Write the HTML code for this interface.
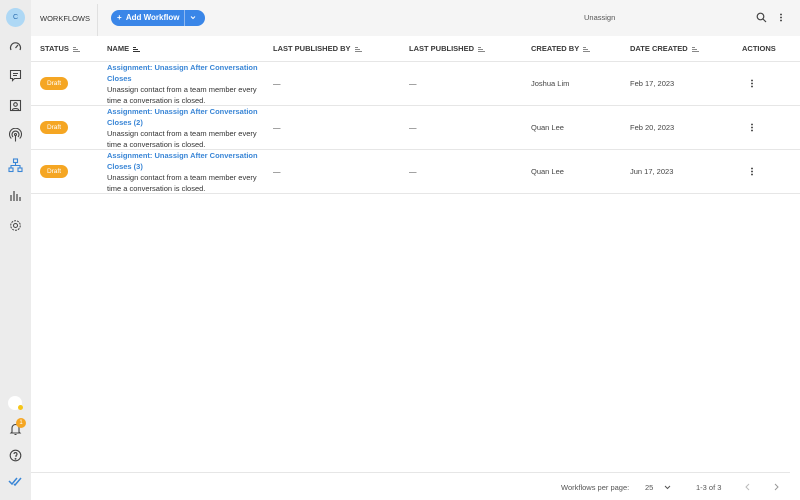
<!DOCTYPE html>
<html><head><style>
*{box-sizing:border-box;margin:0;padding:0}
body{width:800px;height:500px;overflow:hidden;background:#fff;font-family:"Liberation Sans",sans-serif;color:#333;position:relative}
.side{position:absolute;left:0;top:0;width:31px;height:500px;background:#ececec}
.hdr{position:absolute;left:31px;top:0;width:769px;height:36px;background:#f5f5f5}
.abs{position:absolute}
.th{position:absolute;top:44px;font-size:7.5px;font-weight:bold;color:#3a3a3a}
.sort{display:inline-block;width:7px;height:5px;margin-left:4px;vertical-align:middle;background:linear-gradient(#888,#888) 0 0/3px 1px no-repeat,linear-gradient(#888,#888) 0 2px/5px 1px no-repeat,linear-gradient(#888,#888) 0 4px/7px 1px no-repeat}
.line{position:absolute;left:31px;width:769px;height:1px;background:#e6e6e6}
.draft{position:absolute;left:40px;width:28px;height:13px;border-radius:6.5px;background:#f5a623;color:#fff;font-size:6.5px;display:flex;align-items:center;justify-content:center}
.nm{position:absolute;left:107px;font-size:7.5px;line-height:11px;width:165px}
.nm b{color:#3a86d6}
.c{position:absolute;font-size:7.5px;color:#444}
.dots{position:absolute;width:2px;height:8px;background:radial-gradient(circle,#555 0.9px,transparent 1px) 0 0/2px 3px}
svg{position:absolute}
</style></head><body>
<div class="side"></div>
<div class="abs" style="left:6px;top:8px;width:19px;height:19px;border-radius:50%;background:#aed8f5;color:#2a6db0;font-size:7px;text-align:center;line-height:19px">C</div>
<svg style="left:9px;top:40px" width="13" height="13" viewBox="0 0 13 13" fill="none" stroke="#444" stroke-width="1.2"><path d="M2 10A5 5 0 1 1 11 10"/><path d="M6.5 8L9 5"/></svg>
<svg style="left:9px;top:69px" width="13" height="13" viewBox="0 0 13 13" fill="none" stroke="#444" stroke-width="1.1"><path d="M1.5 1.5h10v8h-6l-2 2v-2h-2z"/><path d="M4 4.5h5M4 6.5h4"/></svg>
<svg style="left:9px;top:99px" width="13" height="13" viewBox="0 0 13 13" fill="none" stroke="#444" stroke-width="1.1"><rect x="1.5" y="1.5" width="10" height="10"/><circle cx="6.5" cy="5.5" r="1.8"/><path d="M3.5 11c0-2 6-2 6 0"/></svg>
<svg style="left:9px;top:128px" width="13" height="14" viewBox="0 0 13 14" fill="none" stroke="#444" stroke-width="1.1"><circle cx="6.5" cy="6.5" r="1"/><path d="M6.5 7.5v6M4 9a3.5 3.5 0 1 1 5 0M2.3 10.5a6 6 0 1 1 8.4 0"/></svg>
<svg style="left:8px;top:158px" width="15" height="15" viewBox="0 0 15 15" fill="none" stroke="#3a86d6" stroke-width="1.1"><rect x="5.5" y="1" width="4" height="3.5"/><rect x="1" y="10" width="4" height="3.5"/><rect x="10" y="10" width="4" height="3.5"/><path d="M7.5 4.5v3M3 10V7.5h9V10"/></svg>
<svg style="left:9px;top:189px" width="13" height="13" viewBox="0 0 13 13" stroke="#444" stroke-width="1.2"><path d="M2 12V6M5 12V2M8 12V5M11 12V8"/></svg>
<svg style="left:9px;top:219px" width="13" height="13" viewBox="0 0 13 13" fill="none" stroke="#444" stroke-width="1"><circle cx="6.5" cy="6.5" r="2"/><circle cx="6.5" cy="6.5" r="4.8" stroke-dasharray="2 1"/></svg>
<div class="abs" style="left:8px;top:396px;width:14px;height:14px;border-radius:50%;background:#fff"></div>
<div class="abs" style="left:18px;top:405px;width:5px;height:5px;border-radius:50%;background:#f5c518"></div>
<svg style="left:9px;top:422px" width="13" height="14" viewBox="0 0 13 14" fill="none" stroke="#444" stroke-width="1.1"><path d="M3 10V6a3.5 3.5 0 0 1 7 0v4l1 1H2zM5.5 12.5h2"/></svg>
<div class="abs" style="left:16px;top:418px;width:10px;height:10px;border-radius:50%;background:#f5a623;color:#fff;font-size:6px;text-align:center;line-height:10px">1</div>
<svg style="left:9px;top:449px" width="13" height="13" viewBox="0 0 13 13" fill="none" stroke="#444" stroke-width="1.1"><circle cx="6.5" cy="6.5" r="5.3"/><path d="M5 5a1.5 1.5 0 1 1 2 1.5v1.5"/><circle cx="6.5" cy="9.8" r=".4"/></svg>
<svg style="left:8px;top:476px" width="15" height="12" viewBox="0 0 15 12" fill="none" stroke="#3a86d6" stroke-width="1.5"><path d="M1 5l3 3 5-6M6 8l1 1 6-7"/></svg>

<div class="hdr"></div>
<div class="abs" style="left:40px;top:14px;font-size:7.5px;color:#333">WORKFLOWS</div>
<div class="abs" style="left:97px;top:4px;width:1px;height:32px;background:#e0e0e0"></div>
<div class="abs" style="left:111px;top:10px;width:94px;height:16px;border-radius:8px;background:#3a86e8"></div>
<div class="abs" style="left:117px;top:13px;font-size:8px;color:#fff;font-weight:bold">+&nbsp; Add Workflow</div>
<div class="abs" style="left:184px;top:10px;width:1px;height:16px;background:#8fb8f0"></div>
<svg style="left:190px;top:15px" width="6" height="5" viewBox="0 0 6 5" fill="none" stroke="#fff" stroke-width="1"><path d="M1 1.5l2 2 2-2"/></svg>
<div class="abs" style="left:584px;top:13px;font-size:7.5px;color:#555">Unassign</div>
<svg style="left:756px;top:12px" width="11" height="11" viewBox="0 0 11 11" fill="none" stroke="#444" stroke-width="1.2"><circle cx="4.5" cy="4.5" r="3.3"/><path d="M7 7l3 3"/></svg>
<div class="dots" style="left:780px;top:13px;height:9px"></div>

<div class="th" style="left:40px">STATUS<span class="sort"></span></div>
<div class="th" style="left:107px">NAME<span class="sort" style="background:linear-gradient(#333,#333) 0 0/3px 1px no-repeat,linear-gradient(#333,#333) 0 2px/5px 1px no-repeat,linear-gradient(#333,#333) 0 4px/7px 1px no-repeat"></span></div>
<div class="th" style="left:273px">LAST PUBLISHED BY<span class="sort"></span></div>
<div class="th" style="left:409px">LAST PUBLISHED<span class="sort"></span></div>
<div class="th" style="left:531px">CREATED BY<span class="sort"></span></div>
<div class="th" style="left:630px">DATE CREATED<span class="sort"></span></div>
<div class="th" style="left:742px">ACTIONS</div>
<div class="line" style="top:61px"></div>

<div class="draft" style="top:77px">Draft</div>
<div class="nm" style="top:62px"><b>Assignment: Unassign After Conversation Closes</b><br>Unassign contact from a team member every time a conversation is closed.</div>
<div class="c" style="left:273px;top:79px">—</div><div class="c" style="left:409px;top:79px">—</div>
<div class="c" style="left:531px;top:79px">Joshua Lim</div><div class="c" style="left:630px;top:79px">Feb 17, 2023</div>
<div class="dots" style="left:751px;top:79px;height:9px"></div>
<div class="line" style="top:105px"></div>

<div class="draft" style="top:121px">Draft</div>
<div class="nm" style="top:106px"><b>Assignment: Unassign After Conversation Closes (2)</b><br>Unassign contact from a team member every time a conversation is closed.</div>
<div class="c" style="left:273px;top:123px">—</div><div class="c" style="left:409px;top:123px">—</div>
<div class="c" style="left:531px;top:123px">Quan Lee</div><div class="c" style="left:630px;top:123px">Feb 20, 2023</div>
<div class="dots" style="left:751px;top:123px;height:9px"></div>
<div class="line" style="top:149px"></div>

<div class="draft" style="top:165px">Draft</div>
<div class="nm" style="top:150px"><b>Assignment: Unassign After Conversation Closes (3)</b><br>Unassign contact from a team member every time a conversation is closed.</div>
<div class="c" style="left:273px;top:167px">—</div><div class="c" style="left:409px;top:167px">—</div>
<div class="c" style="left:531px;top:167px">Quan Lee</div><div class="c" style="left:630px;top:167px">Jun 17, 2023</div>
<div class="dots" style="left:751px;top:167px;height:9px"></div>
<div class="line" style="top:193px"></div>

<div class="line" style="top:472px;width:759px"></div>
<div class="c" style="left:561px;top:483px;color:#555">Workflows per page:</div>
<div class="c" style="left:645px;top:483px;color:#555">25</div>
<svg style="left:664px;top:485px" width="7" height="5" viewBox="0 0 7 5" fill="none" stroke="#555" stroke-width="1"><path d="M1 1l2.5 2.5L6 1"/></svg>
<div class="c" style="left:696px;top:483px;color:#555">1-3 of 3</div>
<svg style="left:745px;top:483px" width="5" height="8" viewBox="0 0 5 8" fill="none" stroke="#bbb" stroke-width="1"><path d="M4 1L1 4l3 3"/></svg>
<svg style="left:774px;top:483px" width="5" height="8" viewBox="0 0 5 8" fill="none" stroke="#999" stroke-width="1"><path d="M1 1l3 3-3 3"/></svg>
</body></html>
